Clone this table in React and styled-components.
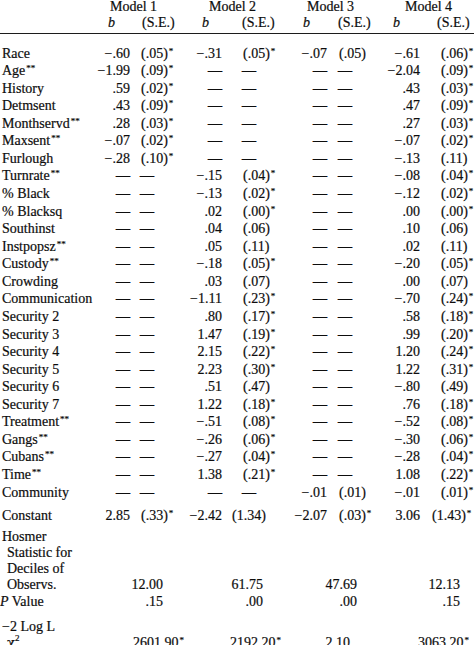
import React from 'react'
import styled, { createGlobalStyle } from 'styled-components'

const GlobalStyle = createGlobalStyle`
  html, body {
    margin: 0;
    padding: 0;
    background: #fff;
  }
  body {
    font-family: "Liberation Serif", "Times New Roman", serif;
    font-size: 14px;
    color: #0d0d0d;
    -webkit-text-stroke: 0.2px #0d0d0d;
  }
`

const COLS = '96px 34px 56px 36px 66px 39px 53px 40px 54px'
const SE_PAD = [11, 21, 12, 21]

// label, then [b, se, sig] per model; null = dashes
const rows = [
  ['Race', false, ['−.60', '(.05)', 1], ['−.31', '(.05)', 1], ['−.07', '(.05)', 0], ['−.61', '(.06)', 1]],
  ['Age', true, ['−1.99', '(.09)', 1], null, null, ['−2.04', '(.09)', 1]],
  ['History', false, ['.59', '(.02)', 1], null, null, ['.43', '(.03)', 1]],
  ['Detmsent', false, ['.43', '(.09)', 1], null, null, ['.47', '(.09)', 1]],
  ['Monthservd', true, ['.28', '(.03)', 1], null, null, ['.27', '(.03)', 1]],
  ['Maxsent', true, ['−.07', '(.02)', 1], null, null, ['−.07', '(.02)', 1]],
  ['Furlough', false, ['−.28', '(.10)', 1], null, null, ['−.13', '(.11)', 0]],
  ['Turnrate', true, null, ['−.15', '(.04)', 1], null, ['−.08', '(.04)', 1]],
  ['% Black', false, null, ['−.13', '(.02)', 1], null, ['−.12', '(.02)', 1]],
  ['% Blacksq', false, null, ['.02', '(.00)', 1], null, ['.00', '(.00)', 1]],
  ['Southinst', false, null, ['.04', '(.06)', 0], null, ['.10', '(.06)', 0]],
  ['Instpopsz', true, null, ['.05', '(.11)', 0], null, ['.02', '(.11)', 0]],
  ['Custody', true, null, ['−.18', '(.05)', 1], null, ['−.20', '(.05)', 1]],
  ['Crowding', false, null, ['.03', '(.07)', 0], null, ['.00', '(.07)', 0]],
  ['Communication', false, null, ['−1.11', '(.23)', 1], null, ['−.70', '(.24)', 1]],
  ['Security 2', false, null, ['.80', '(.17)', 1], null, ['.58', '(.18)', 1]],
  ['Security 3', false, null, ['1.47', '(.19)', 1], null, ['.99', '(.20)', 1]],
  ['Security 4', false, null, ['2.15', '(.22)', 1], null, ['1.20', '(.24)', 1]],
  ['Security 5', false, null, ['2.23', '(.30)', 1], null, ['1.22', '(.31)', 1]],
  ['Security 6', false, null, ['.51', '(.47)', 0], null, ['−.80', '(.49)', 0]],
  ['Security 7', false, null, ['1.22', '(.18)', 1], null, ['.76', '(.18)', 1]],
  ['Treatment', true, null, ['−.51', '(.08)', 1], null, ['−.52', '(.08)', 1]],
  ['Gangs', true, null, ['−.26', '(.06)', 1], null, ['−.30', '(.06)', 1]],
  ['Cubans', true, null, ['−.27', '(.04)', 1], null, ['−.28', '(.04)', 1]],
  ['Time', true, null, ['1.38', '(.21)', 1], null, ['1.08', '(.22)', 1]],
  ['Community', false, null, null, ['−.01', '(.01)', 0], ['−.01', '(.01)', 1]],
]

const constant = [['2.85', '(.33)', 1, 11], ['−2.42', '(1.34)', 0, 10], ['−2.07', '(.03)', 1, 12], ['3.06', '(1.43)', 1, 12]]

const Page = styled.div`
  width: 474px;
  overflow: hidden;
`

const HeadRow = styled.div`
  display: grid;
  grid-template-columns: ${COLS};
  height: ${p => p.$h}px;
  line-height: ${p => p.$h}px;
  white-space: nowrap;
`

const ModelTitle = styled.div`
  grid-column: span 2;
  padding-left: ${p => p.$x}px;
`

const HeadCell = styled.div`
  padding-left: ${p => p.$x}px;
  font-style: ${p => (p.$italic ? 'italic' : 'normal')};
`

const Rule = styled.div`
  margin-top: 2px;
  height: 1px;
  background: #1c1c1c;
`

const Row = styled.div`
  display: grid;
  grid-template-columns: ${COLS};
  align-items: end;
  line-height: ${p => p.$lh || 17.56}px;
  margin-top: ${p => p.$mt || 0}px;
  white-space: nowrap;
`

const Label = styled.div`
  padding-left: ${p => (p.$indent ? 7 : 2)}px;
  margin-left: ${p => (p.$edge ? -2 : 0)}px;
`

const LabelBlock = styled.div`
  padding-left: 2px;
  line-height: 16px;
`

const SubLine = styled.div`
  padding-left: 5px;
`

const Coef = styled.div`
  text-align: right;
`

const SE = styled.div`
  padding-left: ${p => p.$pad}px;
`

const Dash = styled.span`
  -webkit-text-stroke: 0.5px #0d0d0d;
`

const Stat = styled.div`
  grid-column: span 2;
  text-align: right;
  padding-right: ${p => p.$pad}px;
`

const Star = styled.sup`
  font-size: 9px;
  line-height: 0;
  vertical-align: 4px;
  margin-left: 1px;
`

const Chi = styled.span`
  font-family: "DejaVu Serif", "Liberation Serif", serif;
  font-size: 13px;
`

const Sq = styled.sup`
  font-size: 9px;
  line-height: 0;
  vertical-align: 6px;
`

const DASH = '—'

function ModelCells({ cell, i }) {
  if (!cell) {
    return (
      <>
        <Coef><Dash>{DASH}</Dash></Coef>
        <SE $pad={SE_PAD[i] - 1}><Dash>{DASH}</Dash></SE>
      </>
    )
  }
  const [b, se, sig, pad] = cell
  return (
    <>
      <Coef>{b}</Coef>
      <SE $pad={pad ?? SE_PAD[i]}>
        {se}
        {sig ? <Star>*</Star> : null}
      </SE>
    </>
  )
}

export default function App() {
  return (
    <Page>
      <GlobalStyle />
      <HeadRow $h={13.5}>
        <div />
        <ModelTitle $x={14}>Model 1</ModelTitle>
        <ModelTitle $x={23}>Model 2</ModelTitle>
        <ModelTitle $x={19}>Model 3</ModelTitle>
        <ModelTitle $x={25}>Model 4</ModelTitle>
      </HeadRow>
      <HeadRow $h={17.56}>
        <div />
        <HeadCell $x={12} $italic>b</HeadCell>
        <HeadCell $x={12}>(S.E.)</HeadCell>
        <HeadCell $x={16} $italic>b</HeadCell>
        <HeadCell $x={20}>(S.E.)</HeadCell>
        <HeadCell $x={15} $italic>b</HeadCell>
        <HeadCell $x={11}>(S.E.)</HeadCell>
        <HeadCell $x={13} $italic>b</HeadCell>
        <HeadCell $x={17}>(S.E.)</HeadCell>
      </HeadRow>
      <Rule />

      {rows.map(([label, starred, ...models], r) => (
        <Row key={label} $mt={r === 0 ? 10.5 : 0}>
          <Label>
            {label}
            {starred ? <Star>**</Star> : null}
          </Label>
          {models.map((cell, i) => (
            <ModelCells key={i} cell={cell} i={i} />
          ))}
        </Row>
      ))}

      <Row $mt={5.4}>
        <Label>Constant</Label>
        {constant.map((cell, i) => (
          <ModelCells key={i} cell={cell} i={i} />
        ))}
      </Row>

      <Row $mt={5.2} $lh={16}>
        <LabelBlock>
          Hosmer
          <SubLine>Statistic for</SubLine>
          <SubLine>Deciles of</SubLine>
          <SubLine>Observs.</SubLine>
        </LabelBlock>
        <Stat $pad={23}>12.00</Stat>
        <Stat $pad={25}>61.75</Stat>
        <Stat $pad={23}>47.69</Stat>
        <Stat $pad={14}>12.13</Stat>
      </Row>

      <Row>
        <Label $edge>
          <i>P</i> Value
        </Label>
        <Stat $pad={23}>.15</Stat>
        <Stat $pad={25}>.00</Stat>
        <Stat $pad={23}>.00</Stat>
        <Stat $pad={14}>.15</Stat>
      </Row>

      <Row $mt={8.2} $lh={16}>
        <Label>−2 Log L</Label>
      </Row>
      <Row $lh={16}>
        <Label $indent>
          <Chi>χ</Chi>
          <Sq>2</Sq>
        </Label>
        <Stat $pad={2}>
          2601.90<Star>*</Star>
        </Stat>
        <Stat $pad={7}>
          2192.20<Star>*</Star>
        </Stat>
        <Stat $pad={30}>2.10</Stat>
        <Stat $pad={5}>
          3063.20<Star>*</Star>
        </Stat>
      </Row>
    </Page>
  )
}
